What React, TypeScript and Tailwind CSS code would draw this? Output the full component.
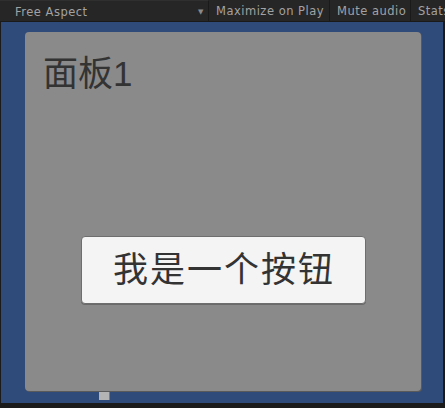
export default function App() {
  const ui = { fontFamily: '"DejaVu Sans", "Liberation Sans", sans-serif' };
  const cjk = { fontFamily: '"Liberation Sans", "Noto Sans CJK SC", sans-serif' };
  return (
    <div className="w-[445px] h-[408px] bg-[#1b1b1b] flex flex-col overflow-hidden">
      {/* Game view toolbar */}
      <div
        className="h-[22px] flex items-stretch bg-[#262626] border-b border-[#1a1a1a] text-[11.5px] tracking-[0.5px] text-[#a2a2a2] whitespace-nowrap"
        style={ui}
      >
        <div className="w-[209px] shrink-0 flex items-center pt-[3px] pl-[15px] pr-[4px] border-r border-[#1a1a1a] border-t border-t-[#2f2f2f]">
          <span className="flex-1">Free Aspect</span>
          <span className="text-[7px] text-[#8a8a8a]">▼</span>
        </div>
        <div className="w-[121px] shrink-0 flex items-center pt-[3px] pl-[7px] border-r border-[#1a1a1a]">Maximize on Play</div>
        <div className="w-[81px] shrink-0 flex items-center pt-[3px] pl-[7px] border-r border-[#1a1a1a]">Mute audio</div>
        <div className="flex-1 flex items-center pt-[3px] pl-[7px] overflow-hidden">Stats</div>
      </div>

      {/* Scene area */}
      <div className="relative flex-1 ml-[1px] mr-[2px] mb-[5px] bg-[#2e4b79] pl-[24px] pr-[22px] pt-[10px] pb-[12px] flex">
        <div
          className="flex-1 flex flex-col rounded-[4px] bg-[#8a8a8a] shadow-[1px_1px_0_#5a5a5a]"
          style={cjk}
        >
          <div className="pl-[18px] pt-[22px] text-[35px] leading-[40px] text-[#333333]">面板1</div>
          <div className="mt-[142px] flex justify-center">
            <div className="w-[285px] h-[68px] rounded-[4px] bg-[#f4f4f4] border border-[#6e6e6e] shadow-[0_1px_0_#6a6a6a] flex items-center justify-center pl-[2px] text-[35px] text-[#333333] tracking-[2px]">
              我是一个按钮
            </div>
          </div>
        </div>
        {/* anchor handle */}
        <div className="absolute left-[98px] top-[370px] w-[10px] h-[8px] bg-[#b4b4b4] shadow-[1px_0_0_#7a7a7a]" />
      </div>
    </div>
  );
}
